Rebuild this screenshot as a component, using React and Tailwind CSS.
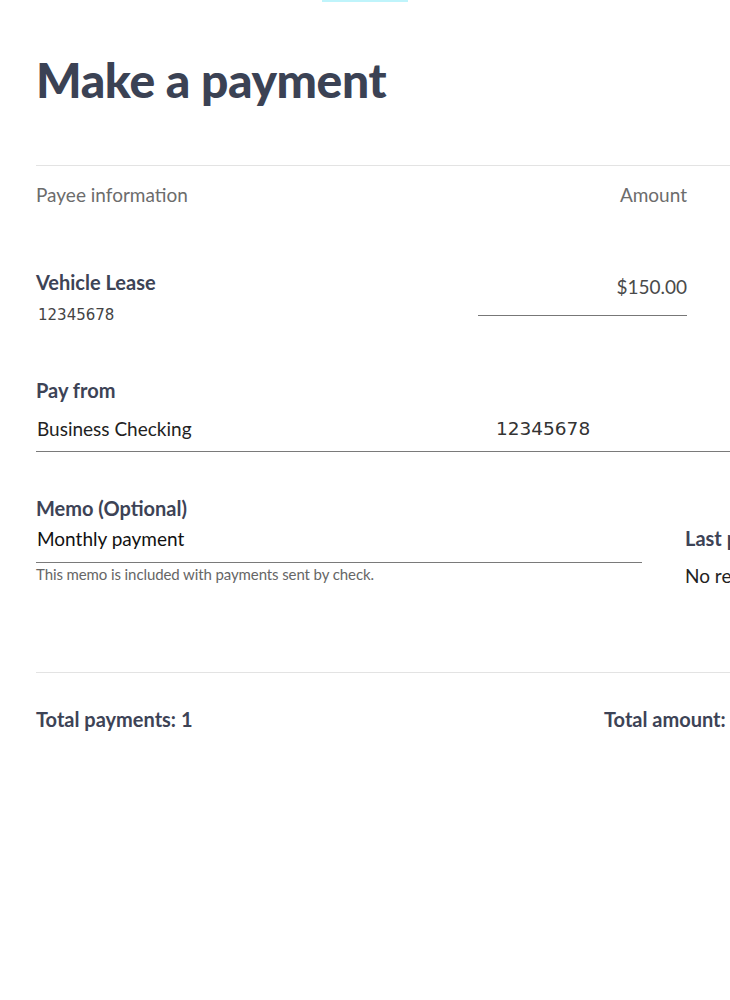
import React from 'react';

function App() {
  return (
    <div
      className="relative w-[730px] h-[1000px] overflow-hidden bg-white"
      style={{ fontFamily: 'Lato, "Open Sans", sans-serif' }}
    >
      {/* faint top accent */}
      <div className="absolute left-[322px] top-0 w-[86px] h-[2px] bg-[#bff4fb]" />

      <div className="pl-[36px] w-[800px]">
        <h1 className="pt-[52px] text-[48px] leading-[56px] font-black tracking-[-0.4px] text-[#3b4254]">
          Make a payment
        </h1>

        {/* table header */}
        <div className="mt-[57px] border-t border-[#e3e3e3] w-[760px]">
          <div className="flex justify-between w-[651px] pt-[17px] text-[19px] leading-[24px] text-[#6c6c6c]">
            <span>Payee information</span>
            <span>Amount</span>
          </div>
        </div>

        {/* payee row */}
        <div className="flex justify-between w-[651px] mt-[63px]">
          <div>
            <div className="text-[20px] leading-[24px] font-bold text-[#3d4356]">Vehicle Lease</div>
            <div
              className="mt-[11px] text-[15px] leading-[20px] text-[#444] pl-[2px]"
              style={{ fontFamily: '"DejaVu Sans", sans-serif' }}
            >
              12345678
            </div>
          </div>
          <div className="w-[209px] flex flex-col items-end pt-[5px]">
            <span className="text-[19px] leading-[24px] text-[#4a4a4a]">$150.00</span>
            <div className="w-full mt-[16px] border-b border-[#777]" />
          </div>
        </div>

        {/* pay from */}
        <div className="mt-[53px]">
          <div className="text-[20px] leading-[24px] font-bold text-[#3d4356]">Pay from</div>
          <div className="flex items-center w-[760px] mt-[15px] pb-[10px] border-b border-[#7a7a7a]">
            <span className="w-[460px] pl-[1px] text-[19px] leading-[24px] text-[#222]">Business Checking</span>
            <span
              className="text-[18.5px] leading-[24px] text-[#333]"
              style={{ fontFamily: '"DejaVu Sans", sans-serif' }}
            >
              12345678
            </span>
          </div>
        </div>

        {/* memo + last payment */}
        <div className="flex mt-[44px]">
          <div className="w-[606px] shrink-0">
            <div className="text-[20px] leading-[24px] font-bold text-[#3d4356]">Memo (Optional)</div>
            <div className="mt-[7px] pb-[11px] pl-[1px] border-b border-[#7a7a7a] text-[19px] leading-[24px] text-[#111]">
              Monthly payment
            </div>
            <div className="mt-[2px] text-[15px] leading-[18px] tracking-[-0.1px] text-[#666]">
              This memo is included with payments sent by check.
            </div>
          </div>
          <div className="ml-[43px] pt-[30px] shrink-0">
            <div className="text-[20px] leading-[24px] font-bold text-[#3d4356] whitespace-nowrap">Last payment</div>
            <div className="mt-[14px] text-[19px] leading-[24px] text-[#222] whitespace-nowrap">No recent payments</div>
          </div>
        </div>

        {/* totals */}
        <div className="mt-[84px] border-t border-[#e3e3e3] w-[760px]">
          <div className="flex pt-[34px] text-[20px] leading-[24px] font-bold text-[#3d4356] whitespace-nowrap">
            <span className="w-[568px] shrink-0">Total payments: 1</span>
            <span>Total amount: $150.00</span>
          </div>
        </div>
      </div>
    </div>
  );
}

export default App;
